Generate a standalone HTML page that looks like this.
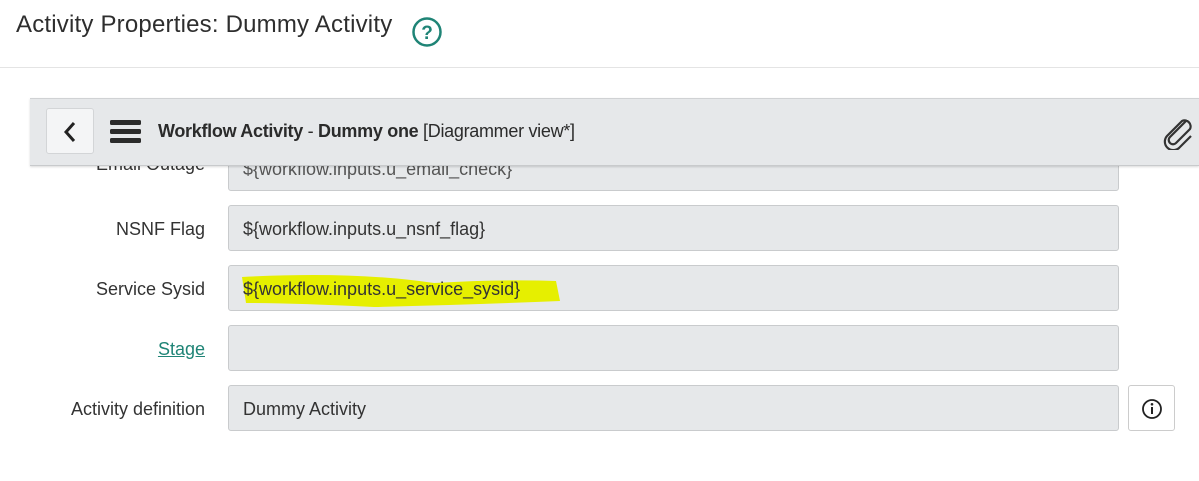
<!DOCTYPE html><html><head><style>
body{margin:0;width:1199px;height:481px;background:#fff;font-family:"Liberation Sans",sans-serif;position:relative;overflow:hidden;color:#2e2e2e}
.a{position:absolute}
.f{position:absolute;left:228px;width:891px;height:46px;background:#e6e8ea;border:1px solid #c9cbcd;border-radius:3px;box-sizing:border-box;font-size:18px;line-height:46px;padding-left:14px;color:#333}
.l{position:absolute;right:994px;font-size:18px;color:#333}
</style></head><body>
<div class="a" style="left:16px;top:11px;font-size:24px;color:#2e2e2e;letter-spacing:0.2px">Activity Properties: Dummy Activity</div>
<svg class="a" style="left:411px;top:16px" width="32" height="32"><circle cx="16" cy="16" r="13.5" fill="none" stroke="#1f8476" stroke-width="2.5"/><text x="16" y="23" text-anchor="middle" font-family="Liberation Sans" font-weight="bold" font-size="19" fill="#1f8476">?</text></svg>
<div class="a" style="left:0;top:67px;width:1199px;height:1px;background:#e4e4e4"></div>
<div class="f" style="top:145px;color:#555">${workflow.inputs.u_email_check}</div>
<div class="l" style="top:154px">Email Outage</div>
<div class="a" style="left:30px;top:98px;width:1169px;height:66px;background:#e6e8ea;border-top:1px solid #d0d2d4;border-bottom:1px solid #c8cacc;box-shadow:0 1px 2px rgba(0,0,0,.15)"></div>
<div class="a" style="left:46px;top:108px;width:48px;height:46px;background:#f4f5f6;border:1px solid #d3d5d7;border-radius:3px;box-sizing:border-box"></div>
<svg class="a" style="left:60px;top:120px" width="20" height="24"><path d="M14 3 L6 12 L14 21" fill="none" stroke="#222" stroke-width="3"/></svg>
<svg class="a" style="left:110px;top:119px" width="32" height="26"><rect x="0" y="1" width="31" height="5" rx="1.5" fill="#2b2b2b"/><rect x="0" y="10" width="31" height="5" rx="1.5" fill="#2b2b2b"/><rect x="0" y="19" width="31" height="5" rx="1.5" fill="#2b2b2b"/></svg>
<div class="a" style="left:158px;top:121px;font-size:18px;color:#2b2b2b;letter-spacing:-0.3px"><b>Workflow Activity</b> - <b>Dummy one</b> [Diagrammer view*]</div>
<svg class="a" style="left:1160px;top:114px" width="36" height="36"><path d="M27 6 L10 23 a4 4 0 0 0 6 6 L30 15 a6 6 0 0 0-8-8 L7 22 a8.5 8.5 0 0 0 12 12 L31 22" fill="none" stroke="#333" stroke-width="2.2"/></svg>
<div class="f" style="top:205px">${workflow.inputs.u_nsnf_flag}</div>
<div class="l" style="top:219px">NSNF Flag</div>
<div class="f" style="top:265px"><svg class="a" style="left:5px;top:3px" width="330" height="40"><path d="M8 8 Q120 2 200 14 Q270 10 322 12 L326 32 Q230 36 140 38 Q60 34 12 34 Z" fill="#e6ef00"/></svg><span style="position:relative">${workflow.inputs.u_service_sysid}</span></div>
<div class="l" style="top:279px">Service Sysid</div>
<div class="f" style="top:325px"></div>
<div class="l" style="top:339px;color:#1f8476;text-decoration:underline">Stage</div>
<div class="f" style="top:385px;width:891px">Dummy Activity</div>
<div class="l" style="top:399px">Activity definition</div>
<div class="a" style="left:1128px;top:385px;width:47px;height:46px;border:1px solid #ccc;border-radius:3px;box-sizing:border-box;background:#fff"></div>
<svg class="a" style="left:1141px;top:398px" width="22" height="22"><circle cx="11" cy="11" r="9" fill="none" stroke="#222" stroke-width="1.8"/><rect x="10" y="9" width="2" height="7" fill="#222"/><circle cx="11" cy="6.3" r="1.3" fill="#222"/></svg>
</body></html>
